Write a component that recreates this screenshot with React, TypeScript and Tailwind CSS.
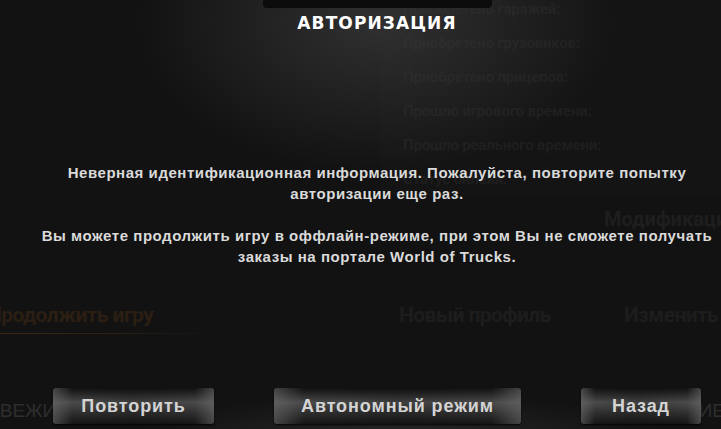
import React from 'react';

const stats = [
  'Приобретено гаражей:',
  'Приобретено грузовиков:',
  'Приобретено прицепов:',
  'Прошло игрового времени:',
  'Прошло реального времени:',
  'Статус онлайн:',
];

// Dimmed main menu that sits behind the dialog
const MenuBackdrop = () => (
  <div className="flex h-full w-full flex-col bg-[#121212] font-['Roboto',sans-serif] font-bold">
    <div className="ml-[380px] flex h-[196px] flex-col overflow-hidden bg-[#141414] pl-[23px]">
      <div className="mt-[-8px] flex flex-col">
        {stats.map((s) => (
          <div key={s} className="flex h-[34px] shrink-0 items-center text-[15px] leading-none tracking-[-0.2px] text-[#1e1e1e]">
            {s}
          </div>
        ))}
      </div>
    </div>
    <div className="mt-[12px] flex h-[22px] items-center pl-[604px] whitespace-nowrap text-[20px] leading-none text-[#1e1e1e]">
      Модификации
    </div>
    <div className="mt-[74px] flex h-[22px] items-center whitespace-nowrap text-[21px] leading-none tracking-[-0.6px]">
      <span className="ml-[-13px] w-[412px] text-[#2b1e12]">Продолжить игру</span>
      <span className="w-[225px] text-[#1d1d1d]">Новый профиль</span>
      <span className="text-[#1d1d1d]">Изменить</span>
    </div>
    <div className="mt-[7px] h-px w-[215px] bg-gradient-to-r from-[#3a2814] via-[#2e2114] to-transparent" />
    <div className="mt-[66px] flex h-[20px] items-center justify-between font-['Liberation_Sans',sans-serif] text-[19px] font-normal leading-none text-[#2e2e2e]">
      <span className="ml-[-14px]">СВЕЖИ</span>
      <span className="mr-[-4px]">ИЕ</span>
    </div>
  </div>
);

const DialogButton = ({ label, width }: { label: string; width: string }) => (
  <button
    className={`relative flex h-[36px] ${width} items-center justify-center overflow-hidden rounded-[3px] bg-[linear-gradient(180deg,#121212_0%,#262626_16%,#4a4a4a_40%,#2e2e2e_70%,#151515_100%)] font-['Liberation_Sans',sans-serif] text-[18px] font-bold tracking-[0.9px] text-[#d4d4d4] shadow-[0_1px_2px_rgba(0,0,0,0.8)]`}
  >
    <span className="absolute inset-0 bg-[linear-gradient(90deg,rgba(110,110,110,0.55)_0%,rgba(0,0,0,0)_12%,rgba(0,0,0,0.15)_50%,rgba(0,0,0,0)_88%,rgba(110,110,110,0.55)_100%)]" />
    <span className="relative">{label}</span>
  </button>
);

const AuthDialog = () => (
  <div className="absolute inset-0 flex flex-col bg-[radial-gradient(ellipse_240px_150px_at_377px_22px,rgba(58,58,58,0.75),rgba(0,0,0,0)),radial-gradient(ellipse_260px_40px_at_400px_435px,rgba(60,60,60,0.5),rgba(0,0,0,0))]">
    <div className="ml-[33px] flex flex-1 flex-col items-center">
      <div className="h-[8px] w-[229px] rounded-b-[4px] bg-[#0c0c0c]" />
      <h1 className="mt-[5px] font-['DejaVu_Sans',sans-serif] text-[17px] font-bold leading-[20px] tracking-[1.1px] text-white">
        АВТОРИЗАЦИЯ
      </h1>
      <div className="mt-[129px] text-center font-['Liberation_Sans',sans-serif] text-[15px] font-bold leading-[21px] tracking-[0.55px] text-[#dadada]">
        <p>
          Неверная идентификационная информация. Пожалуйста, повторите попытку
          <br />
          авторизации еще раз.
        </p>
        <p className="mt-[21px]">
          Вы можете продолжить игру в оффлайн-режиме, при этом Вы не сможете получать
          <br />
          заказы на портале World of Trucks.
        </p>
      </div>
      <div className="mt-auto mb-[5px] flex gap-[60px]">
        <DialogButton label="Повторить" width="w-[161px]" />
        <DialogButton label="Автономный режим" width="w-[247px]" />
        <DialogButton label="Назад" width="w-[120px]" />
      </div>
    </div>
  </div>
);

export default function App() {
  return (
    <div className="relative h-[429px] w-[721px] overflow-hidden bg-[#121212]">
      <MenuBackdrop />
      <AuthDialog />
    </div>
  );
}
